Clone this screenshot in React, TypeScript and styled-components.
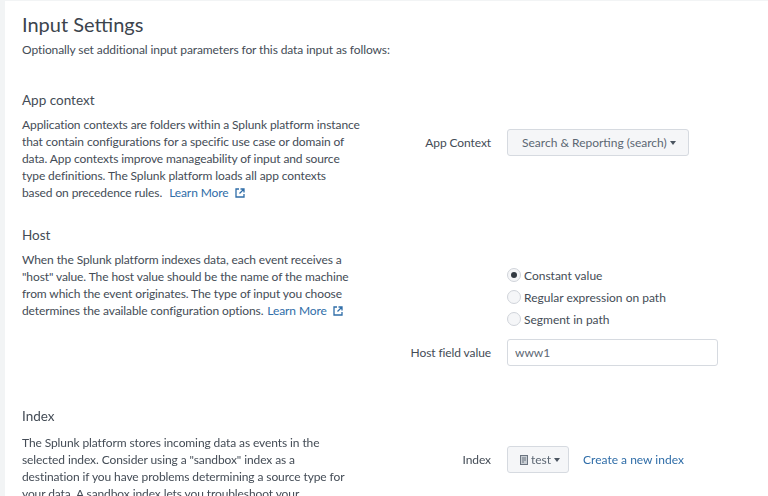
import React from 'react';
import styled, {createGlobalStyle} from 'styled-components';

const GlobalStyle = createGlobalStyle`
  html, body {
    margin: 0;
    height: 100%;
    overflow: hidden;
    background: #fff;
  }
  body {
    font-family: Lato, "Open Sans", sans-serif;
    color: #444c56;
  }
`;

const Page = styled.div`
  display: flex;
  height: 496px;
  overflow: hidden;
  background: #f2f4f5;
`;

const Main = styled.main`
  flex: 1;
  margin-left: 5px;
  margin-top: 1px;
  padding: 11px 0 0 17px;
  background: #fff;
  filter: blur(0.35px);
`;

const Title = styled.h1`
  margin: 0;
  font-size: 20px;
  line-height: 25px;
  font-weight: 400;
  color: #3c444d;
`;

const Lead = styled.p`
  margin: 4px 0 34px;
  font-size: 12px;
  line-height: 17px;
  letter-spacing: -0.1px;
`;

const Section = styled.section<{$height: number}>`
  display: grid;
  grid-template-columns: 345px 1fr;
  height: ${props => props.$height}px;
`;

const Heading = styled.h2<{$gap?: number}>`
  margin: 0 0 ${props => props.$gap ?? 7}px;
  font-size: 13.5px;
  line-height: 17px;
  font-weight: 400;
`;

const Body = styled.p`
  margin: 0;
  font-size: 12px;
  line-height: 17px;
  letter-spacing: -0.1px;
  white-space: nowrap;
`;

const Link = styled.a<{$indent?: number}>`
  margin-left: ${props => props.$indent ?? 0}px;
  color: #2f6da8;
  text-decoration: none;
`;

const External = styled.svg`
  width: 10px;
  height: 10px;
  margin-left: 6px;
  vertical-align: -1px;
`;

const Controls = styled.div<{$top: number}>`
  padding-top: ${props => props.$top}px;
  display: flex;
  flex-direction: column;
`;

const Field = styled.div`
  display: grid;
  grid-template-columns: 124px auto 1fr;
  column-gap: 16px;
  align-items: center;
  justify-items: start;
`;

const Label = styled.label`
  justify-self: end;
  font-size: 12px;
  line-height: 17px;
  letter-spacing: -0.1px;
`;

const Button = styled.button`
  display: flex;
  align-items: center;
  gap: 3px;
  height: 27px;
  padding: 0 12px 0 14px;
  box-sizing: border-box;
  background: #f5f6f8;
  border: 1px solid #d6dae0;
  border-radius: 3px;
  font: inherit;
  font-size: 12px;
  color: #5c6773;
`;

const Caret = styled.span`
  width: 0;
  height: 0;
  border-left: 3px solid transparent;
  border-right: 3px solid transparent;
  border-top: 4px solid #4b5560;
`;

const RadioList = styled.div`
  display: flex;
  flex-direction: column;
  gap: 8px;
  padding-left: 140px;
  margin-bottom: 13px;
`;

const RadioRow = styled.div`
  display: flex;
  align-items: center;
  gap: 3px;
  height: 14px;
  font-size: 12px;
`;

const RadioMark = styled.span<{$on?: boolean}>`
  width: 12px;
  height: 12px;
  border: 1px solid #d0d4da;
  border-radius: 50%;
  background: #f5f6f8;
  display: flex;
  align-items: center;
  justify-content: center;
  &::after {
    content: '';
    display: ${props => (props.$on ? 'block' : 'none')};
    width: 6px;
    height: 6px;
    border-radius: 50%;
    background: #333a42;
  }
`;

const TextBox = styled.input`
  width: 211px;
  height: 27px;
  box-sizing: border-box;
  padding: 0 7px;
  border: 1px solid #d6dae0;
  border-radius: 3px;
  background: #fff;
  font: inherit;
  font-size: 12px;
  color: #5c6773;
`;

const IndexRow = styled.div`
  display: flex;
  align-items: center;
  gap: 14px;
  font-size: 12px;
`;

const IndexButton = styled(Button)`
  padding: 0 8px 0 12px;
`;

const ExternalIcon = () => (
  <External viewBox="0 0 10 10" fill="none" stroke="#2f6da8" strokeWidth="1.3">
    <path d="M4 1H1v8h8V6" />
    <path d="M5.5 1H9v3.5M9 1 4.5 5.5" />
  </External>
);

const App = () => (
  <Page>
    <GlobalStyle />
    <Main>
      <Title>Input Settings</Title>
      <Lead>Optionally set additional input parameters for this data input as follows:</Lead>

      <Section $height={135}>
        <div>
          <Heading>App context</Heading>
          <Body>
            Application contexts are folders within a Splunk platform instance<br />
            that contain configurations for a specific use case or domain of<br />
            data. App contexts improve manageability of input and source<br />
            type definitions. The Splunk platform loads all app contexts<br />
            based on precedence rules. <Link href="#" $indent={4}>Learn More<ExternalIcon /></Link>
          </Body>
        </div>
        <Controls $top={37}>
          <Field>
            <Label>App Context</Label>
            <Button>Search &amp; Reporting (search)<Caret /></Button>
          </Field>
        </Controls>
      </Section>

      <Section $height={181}>
        <div>
          <Heading>Host</Heading>
          <Body>
            When the Splunk platform indexes data, each event receives a<br />
            "host" value. The host value should be the name of the machine<br />
            from which the event originates. The type of input you choose<br />
            determines the available configuration options. <Link href="#" $indent={1}>Learn More<ExternalIcon /></Link>
          </Body>
        </div>
        <Controls $top={41}>
          <RadioList>
            <RadioRow><RadioMark $on />Constant value</RadioRow>
            <RadioRow><RadioMark />Regular expression on path</RadioRow>
            <RadioRow><RadioMark />Segment in path</RadioRow>
          </RadioList>
          <Field>
            <Label>Host field value</Label>
            <TextBox defaultValue="www1" />
          </Field>
        </Controls>
      </Section>

      <Section $height={90}>
        <div>
          <Heading $gap={9}>Index</Heading>
          <Body>
            The Splunk platform stores incoming data as events in the<br />
            selected index. Consider using a "sandbox" index as a<br />
            destination if you have problems determining a source type for<br />
            your data. A sandbox index lets you troubleshoot your
          </Body>
        </div>
        <Controls $top={38}>
          <Field>
            <Label>Index</Label>
            <IndexRow>
              <IndexButton>
                <svg width="8" height="10" viewBox="0 0 8 10" fill="none" stroke="#6b7480">
                  <rect x="0.5" y="0.5" width="7" height="9" fill="#c9ced4" />
                  <path d="M2 3h4M2 5h4M2 7h2" />
                </svg>
                test<Caret />
              </IndexButton>
              <Link href="#">Create a new index</Link>
            </IndexRow>
          </Field>
        </Controls>
      </Section>
    </Main>
  </Page>
);

export default App;
